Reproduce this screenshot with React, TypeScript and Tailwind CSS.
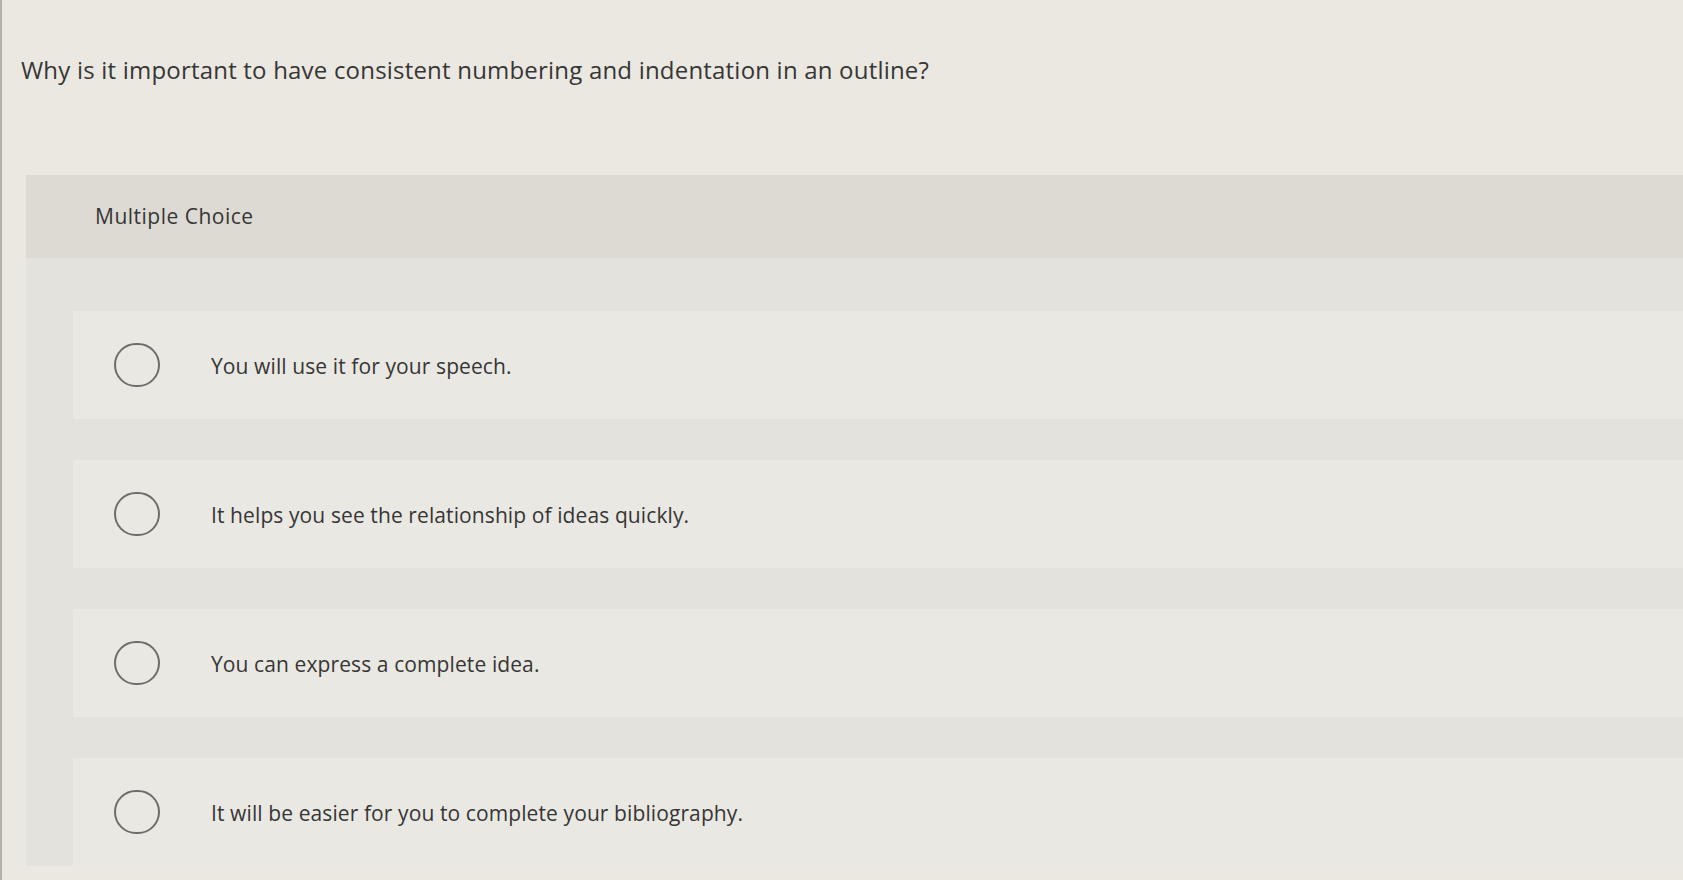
const options = [
  'You will use it for your speech.',
  'It helps you see the relationship of ideas quickly.',
  'You can express a complete idea.',
  'It will be easier for you to complete your bibliography.',
]

function Radio() {
  return (
    <span className="block w-[46px] h-[44px] shrink-0 rounded-full border-2 border-[#6e6d6a]" />
  )
}

export default function App() {
  return (
    <main
      className="h-[880px] overflow-hidden bg-[#ebe8e1] border-l-2 border-[#b4b1aa] text-[#363636]"
      style={{ fontFamily: '"Open Sans", Lato, sans-serif' }}
    >
      {/* Question */}
      <h1 className="pl-[19px] pt-[54px] text-[24px] leading-[32px] tracking-[0.2px]">
        Why is it important to have consistent numbering and indentation in an outline?
      </h1>

      {/* Answer panel */}
      <section className="mt-[89px] ml-[24px] bg-[#e4e2dc]">
        <div className="h-[83px] flex items-center pl-[69px] bg-[#dcdad3] text-[21px] tracking-[0.5px]">
          Multiple Choice
        </div>

        <div className="pl-[47px] pt-[53px] flex flex-col gap-[41px]">
          {options.map((text) => (
            <label
              key={text}
              className="h-[108px] flex items-center bg-[#eae8e2] pl-[41px] gap-[51px] text-[21px] tracking-[0.1px]"
            >
              <Radio />
              <span className="pt-[4px]">{text}</span>
            </label>
          ))}
        </div>
      </section>
    </main>
  )
}
